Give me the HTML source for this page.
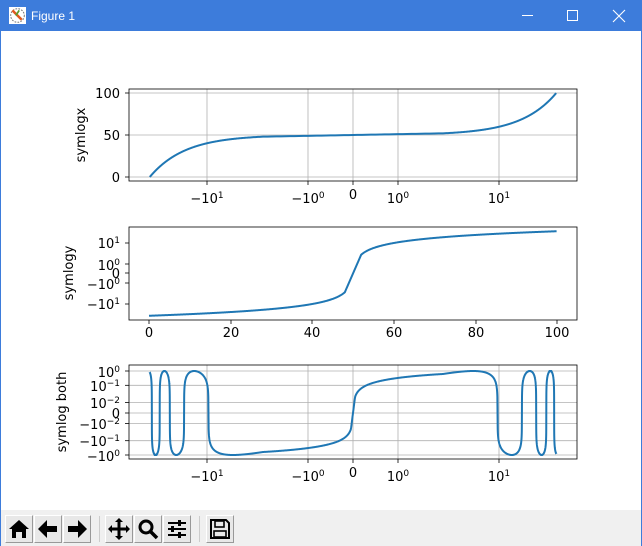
<!DOCTYPE html>
<html><head><meta charset="utf-8"><style>
html,body{margin:0;padding:0;width:642px;height:546px;overflow:hidden;background:#fff;font-family:"DejaVu Sans","Liberation Sans",sans-serif}
#tb{position:absolute;left:0;top:0;width:642px;height:31px;background:#3d7cdb;color:#fff}
#tb .t{position:absolute;left:31px;top:9px;font:12px "Liberation Sans",sans-serif;color:#fff}
#bl{position:absolute;left:0;top:31px;width:1px;height:515px;background:#3d7cdb}
#br{position:absolute;right:0;top:31px;width:1px;height:515px;background:#3d7cdb}
#tool{position:absolute;left:1px;top:510px;width:640px;height:36px;background:#f0f0f0}
.btn{position:absolute;top:5px;width:28px;height:28px;background:#e8e8e8;border:1px solid #fff;border-right-color:#999;border-bottom-color:#999;box-sizing:border-box}
.sep{position:absolute;top:6px;width:1px;height:26px;background:#ccc}
svg text{font-family:"DejaVu Sans",sans-serif;fill:#000}
</style></head><body>
<div id="tb">
<svg width="17" height="17" style="position:absolute;left:9px;top:7px" viewBox="0 0 20 20"><rect x="0" y="0" width="20" height="20" fill="#fff"/><circle cx="10" cy="10" r="8" fill="none" stroke="#777" stroke-width="1.2" stroke-dasharray="2 1.5"/><path d="M4 4 L15 15" stroke="#e05a20" stroke-width="3"/><path d="M12 4 L8 10" stroke="#5a9e2f" stroke-width="2"/></svg>
<span class="t">Figure 1</span>
<div style="position:absolute;left:522px;top:15px;width:11px;height:1px;background:#fff"></div>
<div style="position:absolute;left:567px;top:10px;width:9px;height:9px;border:1px solid #fff"></div>
<svg width="14" height="14" style="position:absolute;left:612px;top:9px"><path d="M1 1L13 13M13 1L1 13" stroke="#fff" stroke-width="1.1"/></svg>
</div>
<div id="bl"></div><div id="br"></div>

<svg id="fig" width="642" height="546" style="position:absolute;left:0;top:0" xmlns="http://www.w3.org/2000/svg">
<g id="grid" stroke="#b0b0b0" stroke-width="0.8"></g>
<g id="curves" fill="none" stroke="#1f77b4" stroke-width="2"></g>
<g fill="none" stroke="#000" stroke-width="0.8">
<rect x="129" y="89" width="448" height="92"/>
<rect x="129" y="227" width="448" height="93"/>
<rect x="129" y="365" width="448" height="94"/>
</g>
<g id="ticks" stroke="#000" stroke-width="0.8"></g>
<g font-size="13">
<text x="120" y="98" text-anchor="end">100</text>
<text x="120" y="140" text-anchor="end">50</text>
<text x="120" y="182" text-anchor="end">0</text>
<text x="207" y="203" text-anchor="middle">−10<tspan font-size="9" dy="-5">1</tspan></text>
<text x="308" y="203" text-anchor="middle">−10<tspan font-size="9" dy="-5">0</tspan></text>
<text x="353" y="199" text-anchor="middle">0</text>
<text x="398" y="203" text-anchor="middle">10<tspan font-size="9" dy="-5">0</tspan></text>
<text x="499" y="203" text-anchor="middle">10<tspan font-size="9" dy="-5">1</tspan></text>
<text transform="translate(85,135) rotate(-90)" text-anchor="middle">symlogx</text>
<text x="120" y="248" text-anchor="end">10<tspan font-size="9" dy="-5">1</tspan></text>
<text x="120" y="270" text-anchor="end">10<tspan font-size="9" dy="-5">0</tspan></text>
<text x="120" y="278" text-anchor="end">0</text>
<text x="120" y="289" text-anchor="end">−10<tspan font-size="9" dy="-5">0</tspan></text>
<text x="120" y="309" text-anchor="end">−10<tspan font-size="9" dy="-5">1</tspan></text>
<text x="149" y="337" text-anchor="middle">0</text>
<text x="231" y="337" text-anchor="middle">20</text>
<text x="312" y="337" text-anchor="middle">40</text>
<text x="394" y="337" text-anchor="middle">60</text>
<text x="476" y="337" text-anchor="middle">80</text>
<text x="557" y="337" text-anchor="middle">100</text>
<text transform="translate(73,273) rotate(-90)" text-anchor="middle">symlogy</text>
<text x="120" y="377" text-anchor="end">10<tspan font-size="9" dy="-5">0</tspan></text>
<text x="120" y="391" text-anchor="end">10<tspan font-size="9" dy="-5">−1</tspan></text>
<text x="120" y="408" text-anchor="end">10<tspan font-size="9" dy="-5">−2</tspan></text>
<text x="120" y="418" text-anchor="end">0</text>
<text x="120" y="429" text-anchor="end">−10<tspan font-size="9" dy="-5">−2</tspan></text>
<text x="120" y="446" text-anchor="end">−10<tspan font-size="9" dy="-5">−1</tspan></text>
<text x="120" y="461" text-anchor="end">−10<tspan font-size="9" dy="-5">0</tspan></text>
<text x="207" y="481" text-anchor="middle">−10<tspan font-size="9" dy="-5">1</tspan></text>
<text x="308" y="481" text-anchor="middle">−10<tspan font-size="9" dy="-5">0</tspan></text>
<text x="353" y="477" text-anchor="middle">0</text>
<text x="398" y="481" text-anchor="middle">10<tspan font-size="9" dy="-5">0</tspan></text>
<text x="499" y="481" text-anchor="middle">10<tspan font-size="9" dy="-5">1</tspan></text>
<text transform="translate(66,412) rotate(-90)" text-anchor="middle">symlog both</text>
</g>
</svg>

<div id="tool">
<div class="btn" style="left:4px"><svg width="26" height="26"><path d="M13 4 L3 13 H6 V22 H10 V16 H16 V22 H20 V13 H23 Z" fill="#000"/></svg></div>
<div class="btn" style="left:33px"><svg width="26" height="26"><path d="M3 13 L12 4 V10 H22 V16 H12 V22 Z" fill="#000"/></svg></div>
<div class="btn" style="left:62px"><svg width="26" height="26"><path d="M23 13 L14 4 V10 H4 V16 H14 V22 Z" fill="#000"/></svg></div>
<div class="sep" style="left:98px"></div>
<div class="btn" style="left:104px"><svg width="26" height="26"><path d="M13 2 L17 6 H14.5 V11.5 H20 V9 L24 13 L20 17 V14.5 H14.5 V20 H17 L13 24 L9 20 H11.5 V14.5 H6 V17 L2 13 L6 9 V11.5 H11.5 V6 H9 Z" fill="#000"/></svg></div>
<div class="btn" style="left:133px"><svg width="26" height="26"><circle cx="11" cy="11" r="6" fill="none" stroke="#000" stroke-width="3"/><path d="M15 15 L22 22" stroke="#000" stroke-width="3.5"/></svg></div>
<div class="btn" style="left:162px"><svg width="26" height="26"><path d="M4 7H22M4 13H22M4 19H22" stroke="#000" stroke-width="2"/><rect x="14" y="4" width="3" height="6" fill="#000"/><rect x="7" y="10" width="3" height="6" fill="#000"/><rect x="14" y="16" width="3" height="6" fill="#000"/></svg></div>
<div class="sep" style="left:198px"></div>
<div class="btn" style="left:205px"><svg width="26" height="26"><path d="M4 4 H19 L22 7 V22 H4 Z" fill="none" stroke="#000" stroke-width="2"/><rect x="8" y="5" width="9" height="6" fill="none" stroke="#000" stroke-width="1.6"/><rect x="7" y="15" width="12" height="6" fill="none" stroke="#000" stroke-width="1.6"/></svg></div>
</div>

<script>
var NS="http://www.w3.org/2000/svg";
function sl(v,t){var la=1/(1-0.1);var a=Math.abs(v);if(a<=t)return v*la/t;return (v<0?-1:1)*(la+Math.log10(a/t));}
var X0=353,XS=81;
function mx(v){return X0+XS*sl(v,2);}
function line(g,x1,y1,x2,y2){var l=document.createElementNS(NS,"line");l.setAttribute("x1",x1);l.setAttribute("y1",y1);l.setAttribute("x2",x2);l.setAttribute("y2",y2);g.appendChild(l);}
var grid=document.getElementById("grid"),ticks=document.getElementById("ticks"),cv=document.getElementById("curves");
var xt=[207,308,353,398,499];
xt.forEach(function(x){line(grid,x,89,x,181);line(ticks,x,181,x,185);});
[93,135,177].forEach(function(y){line(grid,129,y,577,y);line(ticks,125,y,129,y);});
[149,231,312,394,476,557].forEach(function(x){line(ticks,x,320,x,324);});
[243,264,273,283,304].forEach(function(y){line(ticks,125,y,129,y);});
var y3=function(v){return 413-14.31*sl(v,0.015);};
xt.forEach(function(x){line(grid,x,365,x,459);line(ticks,x,459,x,463);});
[1,0.1,0.01,0,-0.01,-0.1,-1].forEach(function(v){var y=y3(v);line(grid,129,y,577,y);line(ticks,125,y,129,y);});
var p1="",p2="",p3="";
for(var i=0;i<10000;i++){var x=-50+i*0.01;var y=i*0.01;
 if(i%10==0){p1+=(i?"L":"M")+mx(x).toFixed(2)+" "+(177-0.84*y).toFixed(2);
 p2+=(i?"L":"M")+(149+4.08*y).toFixed(2)+" "+(273.5-16.85*sl(x,2)).toFixed(2);}
 p3+=(i?"L":"M")+mx(x).toFixed(2)+" "+y3(Math.sin(x/3)).toFixed(2);}
[p1,p2,p3].forEach(function(d){var p=document.createElementNS(NS,"path");p.setAttribute("d",d);cv.appendChild(p);});
</script>
</body></html>
